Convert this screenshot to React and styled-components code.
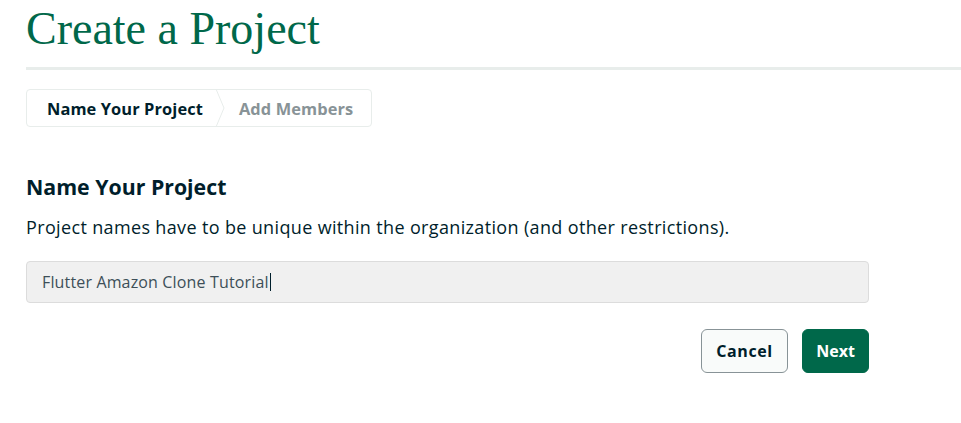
import React from 'react'
import styled, { createGlobalStyle } from 'styled-components'

const GlobalStyle = createGlobalStyle`
    body {
        margin: 0;
        background: #fff;
        font-family: "Open Sans", Lato, sans-serif;
        color: #001E2B;
    }
`

const Page = styled.div`
    padding: 4px 0 0 26px;
`

const Title = styled.h1`
    margin: 0;
    font-family: "Liberation Serif", serif;
    font-weight: 400;
    font-size: 46px;
    line-height: 50px;
    color: #00684A;
`

const Rule = styled.hr`
    margin: 13px 0 0;
    border: none;
    height: 3px;
    background: #E8EDEB;
`

const Steps = styled.div`
    display: inline-flex;
    align-items: center;
    margin-top: 19px;
    height: 38px;
    border: 1px solid #E8EDEB;
    border-radius: 4px;
    box-sizing: border-box;
`

const Step = styled.div`
    padding: 0 ${p => p.$last ? '18px' : '12px'} 0 ${p => p.$first ? '20px' : '14px'};
    font-size: 16.4px;
    letter-spacing: 0.1px;
    font-weight: 700;
    color: ${p => p.$active ? '#001E2B' : '#889397'};
`

const Chevron = styled.svg`
    display: block;
    width: 10px;
    height: 38px;
`

const Section = styled.div`
    width: 843px;
    margin-top: 47px;
`

const Heading = styled.h2`
    margin: 0;
    font-size: 21.3px;
    line-height: 26px;
    font-weight: 700;
`

const Desc = styled.p`
    margin: 15px 0 0;
    font-size: 18px;
    letter-spacing: 0.35px;
    line-height: 24px;
`

const Input = styled.div`
    margin-top: 22px;
    height: 42px;
    box-sizing: border-box;
    display: flex;
    align-items: center;
    padding: 0 15px;
    background: #F0F0F0;
    border: 1px solid #DCDCDC;
    border-radius: 4px;
    font-size: 16px;
    letter-spacing: 0.15px;
    color: #3D4F58;
`

const Caret = styled.span`
    display: inline-block;
    width: 1px;
    height: 18px;
    background: #001E2B;
    margin-left: 1px;
`

const Actions = styled.div`
    display: flex;
    justify-content: flex-end;
    gap: 14px;
    margin-top: 26px;
`

const Button = styled.button`
    height: 44px;
    padding: 0;
    border-radius: 6px;
    font-family: inherit;
    font-size: 16px;
    letter-spacing: ${p => p.$primary ? '0' : '0.6px'};
    font-weight: 700;
    border: 1px solid ${p => p.$primary ? '#00684A' : '#889397'};
    background: ${p => p.$primary ? '#00684A' : '#F9FBFA'};
    color: ${p => p.$primary ? '#fff' : '#001E2B'};
    width: ${p => p.$primary ? '67px' : '87px'};
`

const App = () => {
    return (
        <Page>
            <GlobalStyle />
            <Title>Create a Project</Title>
            <Rule />
            <Steps>
                <Step $first $active>Name Your Project</Step>
                <Chevron viewBox="0 0 10 38">
                    <path d="M1 0 L9 19 L1 38" fill="none" stroke="#E8EDEB" strokeWidth="1" />
                </Chevron>
                <Step $last>Add Members</Step>
            </Steps>
            <Section>
                <Heading>Name Your Project</Heading>
                <Desc>Project names have to be unique within the organization (and other restrictions).</Desc>
                <Input>Flutter Amazon Clone Tutorial<Caret /></Input>
                <Actions>
                    <Button>Cancel</Button>
                    <Button $primary>Next</Button>
                </Actions>
            </Section>
        </Page>
    )
}

export default App
